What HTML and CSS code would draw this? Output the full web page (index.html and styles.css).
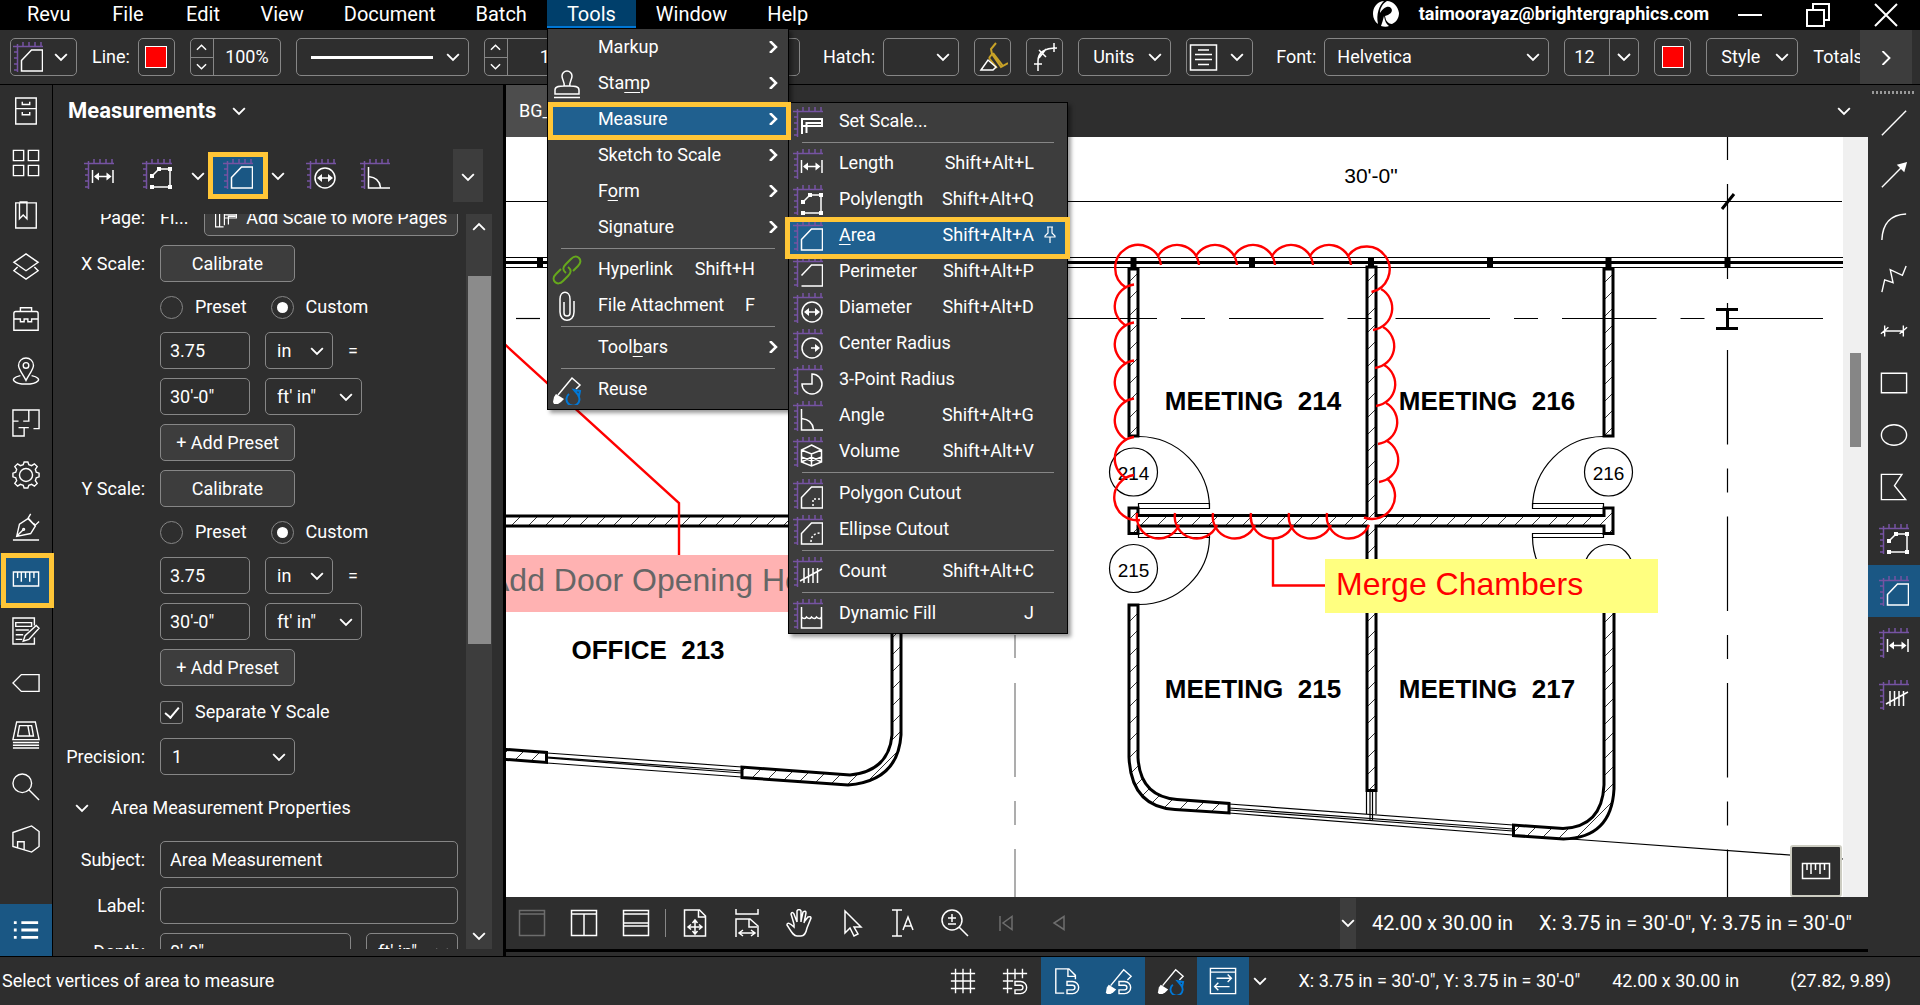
FILE: index.html
```html
<!DOCTYPE html>
<html lang="en">
  <head>
    <meta charset="UTF-8" />
    <meta name="viewport" content="width=device-width, initial-scale=1.0" />
    <title>Revu</title>
    <link rel="stylesheet" href="styles.css">
  </head>

  <body>
    <svg class="sprite" aria-hidden="true">
      <symbol id="down" viewBox="0 0 12 12"><path d="M1 3.500l5 5 5-5" /></symbol>
      <symbol id="up" viewBox="0 0 12 12"><path d="M1 8.500l5-5 5 5" /></symbol>
      <symbol id="right" viewBox="0 0 12 12"><path d="M3 0l6 6-6 6" /></symbol>
      <symbol id="ruler" viewBox="0 0 30 30">
        <path class="purple" d="M0 4.500h30M4.500 2v28M10 0v4M16 0v4M22 0v4M28 0v4M1 10h3M1 16h3M1 22h3M1 28h3" />
      </symbol>
      <symbol id="length" viewBox="0 0 30 30"><use href="#ruler" /><path d="M8.500 11v13M29 11v13M11 17.500h15" /><path class="solid" d="M10 17.500l5-4v8zM27.500 17.500l-5-4v8z" /></symbol>
      <symbol id="polylength" viewBox="0 0 30 30"><use href="#ruler" /><path d="M10 17l7-7h11v18H10" /><path class="solid" d="M8 15h4v4H8zM15 8h4v4h-4zM26 8h4v4h-4zM26 26h4v4h-4zM8 26h4v4H8z" /></symbol>
      <symbol id="area" viewBox="0 0 30 30"><use href="#ruler" /><path d="M8.500 18.500L18.500 8h11v21h-21z" /></symbol>
      <symbol id="perimeter" viewBox="0 0 30 30"><use href="#ruler" /><path d="M8.500 18.500L18.500 8h11v21h-21" /></symbol>
      <symbol id="diameter" viewBox="0 0 30 30"><use href="#ruler" /><circle cx="19" cy="19" r="10" /><path d="M13 19h12" /><path class="solid" d="M11 19l5-4v8zM27 19l-5-4v8z" /></symbol>
      <symbol id="radius" viewBox="0 0 30 30"><use href="#ruler" /><circle cx="19" cy="19" r="10" /><path d="M18 19h6" /><path class="solid" d="M27 19l-5-4v8z" /></symbol>
      <symbol id="radius3" viewBox="0 0 30 30"><use href="#ruler" /><path d="M19 9a10 10 0 1 1-10 10h10z" /></symbol>
      <symbol id="angle" viewBox="0 0 30 30"><use href="#ruler" /><path d="M8.500 8v21H30M8.500 17.500q11 1 12 11" /></symbol>
      <symbol id="volume" viewBox="0 0 30 30"><use href="#ruler" /><path d="M18.500 8l10 5v12l-10 4-10-4V13zM8.500 13l10 4 10-4M18.500 17v12M8.500 25l10-5 10 5M8.500 20l10 4 10-4" /></symbol>
      <symbol id="polycut" viewBox="0 0 30 30"><use href="#ruler" /><path d="M8.500 18.500L18.500 8h11v21h-21z" /><path stroke-dasharray="2 2" d="M20 27v-7h8" /></symbol>
      <symbol id="ellipsecut" viewBox="0 0 30 30"><use href="#ruler" /><path d="M8.500 18.500L18.500 8h11v21h-21z" /><path stroke-dasharray="2 2" d="M18 27q0-9 10-9" /></symbol>
      <symbol id="count" viewBox="0 0 30 30"><use href="#ruler" /><path d="M11 11v15M15.500 11v15M20 11v15M24.500 11v15M7 24l22-12" /></symbol>
      <symbol id="fill" viewBox="0 0 30 30"><use href="#ruler" /><path d="M8.500 8v21h20V8M8.500 18q3 3 5 0 3 3 5 0 3 3 5 0 3 3 5 0" /></symbol>
      <symbol id="setscale" viewBox="0 0 30 30"><use href="#ruler" /><path stroke-width="2" d="M9 27V12h20v7H9M13.500 26V16H28" /></symbol>
      <symbol id="gauge" viewBox="0 0 30 30"><path d="M1.500 7.500h27v15h-27zM6 8v6M10 8v10M14.500 8v6M19 8v10M23.500 8v6" /></symbol>
      <symbol id="hook" viewBox="0 0 30 30"><path d="M6 20L20 3l8 7-4 4" /><path class="solid" d="M4 19l8 5-3 3-3 2H2l-1-2 1-5z" /></symbol>
      <symbol id="magnet" viewBox="0 0 30 30"><path d="M15 15.500h6a6.500 6.500 0 0 1 0 13h-6v-4h6a2.500 2.500 0 0 0 0-5h-6z" /></symbol>
      <symbol id="reuse" viewBox="0 0 30 30"><use href="#hook" /><path class="blue" d="M17 19a6.500 6.500 0 1 0 9 1M28 16l-6-1 5 6z" /></symbol>
      <symbol id="pages" viewBox="0 0 30 30"><path d="M2 4h8M2 4v22h5M7 10v16h5M13 24V8h15v7H13M13 11h15M18 23V13h9" /></symbol>
    </svg>

    <nav class="menubar">
      <button class="menu-item">Revu</button>
      <button class="menu-item">File</button>
      <button class="menu-item">Edit</button>
      <button class="menu-item">View</button>
      <button class="menu-item">Document</button>
      <button class="menu-item">Batch</button>
      <div class="menu-holder">
        <button class="menu-item open">Tools</button>
        <ul class="menu">
          <li class="entry"><span class="icon"></span>Markup<svg class="arrow"><use href="#right" /></svg></li>
          <li class="entry">
            <svg class="icon" viewBox="0 0 30 30"><path d="M12 17c1-4-2-6-2-10a5 5 0 0 1 10 0c0 4-3 6-2 10M12 17c-4 0-9 0-9 4v4h24v-4c0-4-5-4-9-4zM2 28.500h26" /></svg>
            <span>Sta<u>m</u>p</span><svg class="arrow"><use href="#right" /></svg>
          </li>
          <li class="entry selected marked">
            <span class="icon"></span>Measure<svg class="arrow"><use href="#right" /></svg>
            <ul class="menu submenu">
              <li class="entry"><svg class="icon"><use href="#setscale" /></svg>Set Scale...</li>
              <li class="line"></li>
              <li class="entry"><svg class="icon"><use href="#length" /></svg>Length<kbd>Shift+Alt+L</kbd></li>
              <li class="entry"><svg class="icon"><use href="#polylength" /></svg>Polylength<kbd>Shift+Alt+Q</kbd></li>
              <li class="entry selected marked">
                <svg class="icon"><use href="#area" /></svg><span><u>A</u>rea</span><kbd>Shift+Alt+A</kbd>
                <svg class="pin" viewBox="0 0 12 18"><path d="M3 1h6M4 1v6L1 10v1h10v-1L8 7V1M6 11v6" /></svg>
              </li>
              <li class="entry"><svg class="icon"><use href="#perimeter" /></svg>Perimeter<kbd>Shift+Alt+P</kbd></li>
              <li class="entry"><svg class="icon"><use href="#diameter" /></svg>Diameter<kbd>Shift+Alt+D</kbd></li>
              <li class="entry"><svg class="icon"><use href="#radius" /></svg>Center Radius</li>
              <li class="entry"><svg class="icon"><use href="#radius3" /></svg>3-Point Radius</li>
              <li class="entry"><svg class="icon"><use href="#angle" /></svg>Angle<kbd>Shift+Alt+G</kbd></li>
              <li class="entry"><svg class="icon"><use href="#volume" /></svg>Volume<kbd>Shift+Alt+V</kbd></li>
              <li class="line"></li>
              <li class="entry"><svg class="icon"><use href="#polycut" /></svg>Polygon Cutout</li>
              <li class="entry"><svg class="icon"><use href="#ellipsecut" /></svg>Ellipse Cutout</li>
              <li class="line"></li>
              <li class="entry"><svg class="icon"><use href="#count" /></svg>Count<kbd>Shift+Alt+C</kbd></li>
              <li class="line"></li>
              <li class="entry"><svg class="icon"><use href="#fill" /></svg>Dynamic Fill<kbd>J</kbd></li>
            </ul>
          </li>
          <li class="entry"><span class="icon"></span>Sketch to Scale<svg class="arrow"><use href="#right" /></svg></li>
          <li class="entry"><span class="icon"></span><span>F<u>o</u>rm</span><svg class="arrow"><use href="#right" /></svg></li>
          <li class="entry"><span class="icon"></span>Signature<svg class="arrow"><use href="#right" /></svg></li>
          <li class="line"></li>
          <li class="entry">
            <svg class="icon green" viewBox="0 0 30 30"><path d="M14 18c-4-3-3-6 0-9l5-5c3-3 6-3 8-1s2 5-1 8l-5 5M16 12c4 3 3 6 0 9l-5 5c-3 3-6 3-8 1s-2-5 1-8l5-5" /></svg>
            Hyperlink<kbd>Shift+H</kbd>
          </li>
          <li class="entry">
            <svg class="icon" viewBox="0 0 30 30"><path d="M12 11v11a3 3 0 0 0 6 0V8c0-9-10-9-10 0v13c0 11 14 11 14 0V10" /></svg>
            File Attachment<kbd>F</kbd>
          </li>
          <li class="line"></li>
          <li class="entry"><span class="icon"></span><span>Tool<u>b</u>ars</span><svg class="arrow"><use href="#right" /></svg></li>
          <li class="line"></li>
          <li class="entry"><svg class="icon"><use href="#reuse" /></svg>Reuse</li>
        </ul>
      </div>
      <button class="menu-item">Window</button>
      <button class="menu-item">Help</button>
      <div class="account">
        <svg class="logo" viewBox="0 0 26 26"><path class="solid" d="M11 0C3 1 0 7 0 13c0 4 2 8 5 10C3 13 6 5 11 0zM14 0C9 3 7 8 7 12c3-5 8-8 11-5 3 4-2 7-6 8l1 4c2 3 4 4 6 4 5-2 7-7 7-11C25 5 20 0 14 0zM11 15c-1 4-2 7-3 10 3 1 6 1 8 0-3-2-4-5-5-10z" /></svg>
        <span class="email">taimoorayaz@brightergraphics.com</span>
      </div>
      <button class="window-btn" aria-label="Minimize"><svg viewBox="0 0 24 24"><path d="M0 12h24" /></svg></button>
      <button class="window-btn" aria-label="Restore"><svg viewBox="0 0 24 24"><path d="M1 7h17v16H1zM7 6V1h16v16h-5" /></svg></button>
      <button class="window-btn" aria-label="Close"><svg viewBox="0 0 24 24"><path d="M1 1l22 22M23 1L1 23" /></svg></button>
    </nav>

    <div class="toolbar">
      <button class="box tool-picker" aria-label="Area tool"><svg class="icon"><use href="#area" /></svg><svg class="chevron"><use href="#down" /></svg></button>
      <div class="group"><span>Line:</span><button class="box swatch" aria-label="Line color"><i></i></button></div>
      <div class="box spin">
        <div class="steps"><button aria-label="Increase"><svg class="chevron"><use href="#up" /></svg></button><button aria-label="Decrease"><svg class="chevron"><use href="#down" /></svg></button></div>
        <input aria-label="Opacity" value="100%">
      </div>
      <button class="box line-style" aria-label="Line style"><hr><svg class="chevron"><use href="#down" /></svg></button>
      <div class="box spin line-width">
        <div class="steps"><button aria-label="Increase"><svg class="chevron"><use href="#up" /></svg></button><button aria-label="Decrease"><svg class="chevron"><use href="#down" /></svg></button></div>
        <input aria-label="Line width" value="1">
      </div>
      <button class="box fill-color" aria-label="Fill color"></button>
      <div class="group wide"><label for="hatch">Hatch:</label><select class="box" id="hatch"><option></option></select></div>
      <button class="box square" aria-label="Highlight">
        <svg viewBox="0 0 30 30"><path class="gold" d="M18 1l-5 6 1 5-3 4M14 12l9 13 7-4M15 11l10 13M11 16l8 10" /><path d="M3 28l7-10 8 7-3 3z" /></svg>
      </button>
      <button class="box square" aria-label="Curve">
        <svg viewBox="0 0 30 30"><path d="M8 29V19Q8 6 27 6M4 22h8M24 1v9M9 8l7 7M16 7l-7 9" /></svg>
      </button>
      <select class="box units" aria-label="Units"><option>Units</option></select>
      <button class="box align" aria-label="Text alignment">
        <svg class="icon" viewBox="0 0 30 30"><path d="M1.500 3h26v25h-26zM9 8h11M6 12.500h17M6 17.500h17M9 22.500h11" /></svg>
        <svg class="chevron"><use href="#down" /></svg>
      </button>
      <div class="group wide"><label for="font">Font:</label><select class="box" id="font"><option>Helvetica</option></select></div>
      <select class="box size" aria-label="Font size"><option>12</option></select>
      <button class="box swatch" aria-label="Font color"><i></i></button>
      <select class="box style" aria-label="Style"><option>Style</option></select>
      <span class="totals">Totals</span>
      <button class="more" aria-label="More"><svg class="chevron"><use href="#right" /></svg></button>
    </div>

    <div class="workspace">
      <div class="rail">
        <button aria-label="File access"><svg viewBox="0 0 30 30"><path d="M4 1h22v28H4zM4 12.500h22M11 5v3h8V5M11 16v3h8v-3" /></svg></button>
        <button aria-label="Thumbnails"><svg viewBox="0 0 30 30"><path d="M1.500 1.500h11v11h-11zM17.500 1.500h11v11h-11zM1.500 17.500h11v11h-11zM17.500 17.500h11v11h-11z" /></svg></button>
        <button aria-label="Bookmarks"><svg viewBox="0 0 30 30"><path d="M4 2h22v27H4zM8 2v17l4-4 4 4V1H8" /></svg></button>
        <button aria-label="Layers"><svg viewBox="0 0 30 30"><path d="M15 1l13 9-13 9L2 10zM6 15l-4 4 13 9 13-9-4-4" /></svg></button>
        <button aria-label="Tool chest"><svg viewBox="0 0 30 30"><path d="M2 9q0-2 2-2h22q2 0 2 2v18H2zM9 7V3h12v4M2 15h7v3h4v-3h4v3h4v-3h7" /></svg></button>
        <button aria-label="Places"><svg viewBox="0 0 30 30"><path d="M15 25C12 19 7 13 7 9a8 8 0 0 1 16 0c0 4-5 10-8 16z" /><circle cx="15" cy="9" r="3" /><path d="M9 20c-14 3-6 9 6 9s20-6 6-9" /></svg></button>
        <button aria-label="Spaces"><svg viewBox="0 0 30 30"><path d="M7 13H1V1h28v20h-6M1 13v16h12v-9M18 2v11h-6M7 20h11" /></svg></button>
        <button aria-label="Properties"><svg viewBox="0 0 30 30"><path d="M13 1h4l1 3 3 1 3-2 3 3-2 3 1 3 3 1v4l-3 1-1 3 2 3-3 3-3-2-3 1-1 3h-4l-1-3-3-1-3 2-3-3 2-3-1-3-3-1v-4l3-1 1-3-2-3 3-3 3 2 3-1z" /><circle cx="15" cy="15" r="7" /></svg></button>
        <button aria-label="Signatures"><svg viewBox="0 0 30 30"><path d="M1 29h28M5 25l3-13 9-6 8 8-5 8zM5 25l7-7M17 6l3-5M17 5l8 9M23 11l2 2 4-4" /><circle cx="12.500" cy="17.500" r="1" /></svg></button>
        <button class="active marked" aria-label="Measurements"><svg viewBox="0 0 30 30"><use href="#gauge" /></svg></button>
        <button aria-label="Forms"><svg viewBox="0 0 30 30"><path d="M24 9V1H1v28h23v-7M4 6h17v4H4zM4 14h14M4 19h8M4 24h7M12 26l2-6L26 9l3 3-11 12z" /></svg></button>
        <button aria-label="Tags"><svg viewBox="0 0 30 30"><path d="M10 6h19v18H10l-9-9z" /></svg></button>
        <button aria-label="Sets"><svg viewBox="0 0 30 30"><path d="M5 1h20l4 19H1zM8 5h13l2 11H6zM17 5l2 11M1 23h28M1 26h28M1 29h28" /></svg></button>
        <button aria-label="Search"><svg viewBox="0 0 30 30"><circle cx="11" cy="11" r="10" /><path d="M18 18l11 11" /></svg></button>
        <button aria-label="3D model"><svg viewBox="0 0 30 30"><path d="M1 8l20-7 8 6v16l-8 6-20-6zM6 25v-7h7v9" /></svg></button>
        <button class="active last" aria-label="Markups list"><svg viewBox="0 0 30 30"><path class="thick" d="M2 7h3M10 7h18M2 15h3M10 15h18M2 23h3M10 23h18" /></svg></button>
      </div>

      <section class="panel">
        <h1>Measurements <svg class="chevron"><use href="#down" /></svg></h1>
        <div class="tools">
          <button class="tool" aria-label="Length"><svg class="icon"><use href="#length" /></svg></button>
          <button class="tool split" aria-label="Polylength"><svg class="icon"><use href="#polylength" /></svg><svg class="chevron"><use href="#down" /></svg></button>
          <button class="tool active marked" aria-label="Area"><svg class="icon"><use href="#area" /></svg></button>
          <button class="tool drop" aria-label="More area tools"><svg class="chevron"><use href="#down" /></svg></button>
          <button class="tool" aria-label="Diameter"><svg class="icon"><use href="#diameter" /></svg></button>
          <button class="tool" aria-label="Angle"><svg class="icon"><use href="#angle" /></svg></button>
          <button class="expand" aria-label="Expand"><svg class="chevron"><use href="#down" /></svg></button>
        </div>
        <div class="scroller">
          <form class="form">
            <div class="row"><span class="name">Page:</span><span>Fl...</span><button type="button" class="box btn grow"><svg class="icon small"><use href="#pages" /></svg>Add Scale to More Pages</button></div>
            <div class="row"><span class="name">X Scale:</span><button type="button" class="box btn">Calibrate</button></div>
            <div class="row choices">
              <span class="name"></span>
              <label class="choice"><input type="radio" name="x-mode">Preset</label>
              <label class="choice"><input type="radio" name="x-mode" checked>Custom</label>
            </div>
            <div class="row"><span class="name"></span><input class="box num" aria-label="X paper length" value="3.75"><select class="box unit" aria-label="X paper unit"><option>in</option></select>=</div>
            <div class="row"><span class="name"></span><input class="box num" aria-label="X real length" value="30'-0&quot;"><select class="box unit long" aria-label="X real unit"><option>ft' in"</option></select></div>
            <div class="row"><span class="name"></span><button type="button" class="box btn">+ Add Preset</button></div>
            <div class="row"><span class="name">Y Scale:</span><button type="button" class="box btn">Calibrate</button></div>
            <div class="row choices">
              <span class="name"></span>
              <label class="choice"><input type="radio" name="y-mode">Preset</label>
              <label class="choice"><input type="radio" name="y-mode" checked>Custom</label>
            </div>
            <div class="row"><span class="name"></span><input class="box num" aria-label="Y paper length" value="3.75"><select class="box unit" aria-label="Y paper unit"><option>in</option></select>=</div>
            <div class="row"><span class="name"></span><input class="box num" aria-label="Y real length" value="30'-0&quot;"><select class="box unit long" aria-label="Y real unit"><option>ft' in"</option></select></div>
            <div class="row"><span class="name"></span><button type="button" class="box btn">+ Add Preset</button></div>
            <div class="row choices check"><span class="name"></span><label class="choice"><input type="checkbox" checked>Separate Y Scale</label></div>
            <div class="row"><label class="name" for="precision">Precision:</label><select class="box precision" id="precision"><option>1</option></select></div>
            <h2><svg class="chevron"><use href="#down" /></svg>Area Measurement Properties</h2>
            <div class="row"><label class="name" for="subject">Subject:</label><input class="box grow" id="subject" value="Area Measurement"></div>
            <div class="row"><label class="name" for="label">Label:</label><input class="box grow" id="label"></div>
            <div class="row"><label class="name" for="depth">Depth:</label><input class="box grow" id="depth" value="0'-0&quot;"><select class="box depth-unit" aria-label="Depth unit"><option>ft' in"</option></select></div>
          </form>
          <div class="scrollbar"><svg class="chevron"><use href="#up" /></svg><div class="thumb"></div><svg class="chevron"><use href="#down" /></svg></div>
        </div>
      </section>

      <main class="document">
        <div class="tabs"><div class="tab">BG_</div><svg class="chevron"><use href="#down" /></svg></div>
        <div class="page">
          <svg class="plan" viewBox="506 137 1337 760" preserveAspectRatio="xMinYMin slice">
            <defs>
              <pattern id="hatching" width="17" height="17" patternUnits="userSpaceOnUse"><path d="M-1 18L18 -1" stroke="#000" stroke-width="0.800" /></pattern>
              <path id="top" d="M-19 11A22 22 0 0 1 22 20" />
              <path id="left" d="M12 19A22 22 0 0 1 20 -22" />
              <path id="bottom" d="M-23 -23A22 22 0 0 0 19 -11" />
              <path id="side" d="M-10 -20A22 22 0 0 1 -18 21" />
            </defs>

            <!-- grid lines -->
            <g class="thin">
              <path d="M506 201.500H1842M506 257.500H1843M506 267.500H1843" />
              <path d="M516 318.500h24" />
              <path d="M1062.500 318.500H1823" stroke-dasharray="94.500 24 24 24" />
              <path d="M1727.500 137v23M1727.500 184v95M1727.500 303v6" />
              <path d="M1727.500 350V897" stroke-dasharray="94.500 24 24 24" />
              <path d="M1564 838.500L1843 859" />
              <path class="grey" d="M1015 635v23M1015 683v94M1015 801v24M1015 849v48" />
            </g>
            <path class="wall" d="M506 262.500H1843M1716 309.500h22M1716 328.500h22M1722 209l12-15" />
            <path class="wall" d="M1727.500 309v20" />
            <path class="solid" d="M537 257h6v11h-6zM1130.500 257h6v11h-6zM1249 257h6v11h-6zM1368 257h6v11h-6zM1487 257h6v11h-6zM1605.500 257h6v11h-6zM1724.500 257h6v11h-6z" />

            <!-- walls -->
            <g class="wall" fill="url(#hatching)">
              <path d="M1129 269h9v167h-9z" />
              <path d="M1604 269h9v167h-9z" />
              <path d="M1367 267v248.500H1138V508h-9v25.500h9v-7.500h229v264.500h9V526h228v7.500h9V508h-9v7.500h-228V267z" />
              <path d="M1129 605v152q2 50 46 52.500l54 3.500v-9.500l-52-4q-37-3-39-42V605z" />
              <path d="M1604 605v180q-2 42-41 43.500l-49.500-3.500v10.500l50 3.500q48-1 50.500-50V605z" />
              <path d="M500 516h300v10H500z" />
              <path d="M892 600v135q-3 36-42 40l-108-8v10.500l106 7.500q50-4 53-50V600z" />
              <path d="M500 749l46.500 3.500v10L500 759z" />
            </g>

            <!-- windows -->
            <g class="thin">
              <path d="M1229 804l284 21M1229 808l284 21M1229 810l284 21M1229 813l284 22" />
              <path d="M547 753l195 14M547 757l195 14M547 758l195 15M547 763l195 14" />
              <path d="M1370 792v28M1372.500 792v28M1366.500 792v22M1376 792v22" />
            </g>

            <!-- doors -->
            <g class="thin">
              <path d="M1138.500 503.500h71v5h-71zM1138.500 533.500h71v4h-71zM1139 436.500A71 72 0 0 1 1209.500 508M1209.500 537A71 68 0 0 1 1139 604.500" />
              <path d="M1532.500 503.500h71v5h-71zM1532.500 533.500h71v4h-71zM1603 436.500A71 72 0 0 0 1532.500 508M1532.500 537A71 68 0 0 0 1603 604.500" />
              <circle cx="1133.500" cy="472" r="24" />
              <circle cx="1133.500" cy="568.500" r="24" />
              <circle cx="1608.500" cy="472" r="24" />
              <circle cx="1608.500" cy="568.500" r="24" />
            </g>
            <text class="door" x="1133.500" y="480">214</text>
            <text class="door" x="1133.500" y="577">215</text>
            <text class="door" x="1608.500" y="480">216</text>

            <text class="dim" x="1371" y="183">30'-0"</text>
            <text class="room" x="1253" y="410">MEETING&#160; 214</text>
            <text class="room" x="1487" y="410">MEETING&#160; 216</text>
            <text class="room" x="1253" y="698">MEETING&#160; 215</text>
            <text class="room" x="1487" y="698">MEETING&#160; 217</text>
            <text class="room" x="648" y="659">OFFICE&#160; 213</text>

            <!-- markups -->
            <g class="cloud">
              <path d="M1126 287.500A23 23 0 1 1 1161 265" />
              <use href="#top" x="1177" y="245" /><use href="#top" x="1215" y="245" /><use href="#top" x="1253" y="245" /><use href="#top" x="1291" y="245" /><use href="#top" x="1329" y="245" />
              <path d="M1348 256A23 23 0 1 1 1371.500 292" />
              <use href="#side" x="1391" y="309" /><use href="#side" x="1393" y="347" /><use href="#side" x="1394" y="385" /><use href="#side" x="1396" y="423" /><use href="#side" x="1397" y="461" />
              <path d="M1387 478.500A23 23 0 0 1 1364 517.500" />
              <use href="#left" x="1114" y="306.500" /><use href="#left" x="1114" y="344.500" /><use href="#left" x="1114" y="382.500" /><use href="#left" x="1114" y="420.500" /><use href="#left" x="1114" y="459" />
              <path d="M1134 475A22.500 22.500 0 1 0 1140 520" />
              <use href="#bottom" x="1160" y="536" /><use href="#bottom" x="1198" y="536" /><use href="#bottom" x="1236" y="536" /><use href="#bottom" x="1274" y="536" /><use href="#bottom" x="1312" y="536" /><use href="#bottom" x="1350" y="536" />
              <path d="M1273 538v47.500h52M500 340l179 163v52" />
            </g>
            <rect class="note" x="1325" y="559" width="333" height="54" />
            <text class="note-text" x="1336" y="595">Merge Chambers</text>
            <rect class="pink" x="500" y="555" width="380" height="57" />
            <text class="pink-text" x="488" y="591">Add Door Opening Here</text>
          </svg>
          <div class="page-scroll"><div class="thumb"></div></div>
          <button class="float" aria-label="Page scale"><svg viewBox="0 0 30 30"><use href="#gauge" /></svg></button>
        </div>
        <div class="navbar">
          <button disabled aria-label="Single view"><svg viewBox="0 0 28 28"><path d="M1.500 1.500h25v25h-25zM1.500 5h25" /></svg></button>
          <button aria-label="Split vertical"><svg viewBox="0 0 28 28"><path d="M1.500 1.500h25v25h-25zM1.500 5h25M14 5v21" /></svg></button>
          <button aria-label="Split horizontal"><svg viewBox="0 0 28 28"><path d="M1.500 1.500h25v25h-25zM1.500 5h25M1.500 14h25M1.500 17h25" /></svg></button>
          <i class="divider"></i>
          <button aria-label="Fit page"><svg viewBox="0 0 28 28"><path d="M3.500 1h15l6 6v20h-21zM17.500 1v7h7M14 12v12M8 18h12M11.500 14l2.500-3 2.500 3M11.500 22l2.500 3 2.500-3M10 15.500L7 18l3 2.500M18 15.500l3 2.500-3 2.500" /></svg></button>
          <button aria-label="Fit width"><svg viewBox="0 0 28 28"><path d="M3 0v5h22V0M3 28V10h14l8 7v11M16 10v8h8M7 24h14M10 21l-4 3 4 3M18 21l4 3-4 3" /></svg></button>
          <button aria-label="Pan"><svg viewBox="0 0 28 28"><path d="M9 15L6 5q1-3 3 0l3 8M12 13V2q2-3 4 0v11M16 12l2-9q3-2 3 1l-2 10M19 13l4-5q3-1 3 1l-4 10c-1 5-3 8-6 8h-4c-4 0-6-5-10-11 0-3 3-2 7 2v-3" /></svg></button>
          <button aria-label="Select"><svg viewBox="0 0 28 28"><path d="M8 2v22l5-5 4 8 4-2-4-7h7z" /></svg></button>
          <button class="text-select" aria-label="Select text"><svg viewBox="0 0 28 28"><path d="M3 1h10M3 27h10M8 1v26M14 21l5-13 5 13M16 17h6" /></svg></button>
          <button aria-label="Zoom"><svg viewBox="0 0 28 28"><circle cx="11" cy="11" r="10" /><path d="M18 18l9 9M7 9h8M11 5v8M7 15h8" /></svg></button>
          <button disabled aria-label="First page"><svg viewBox="0 0 28 28"><path d="M7 7v15M19 7.500v13l-9-6.500z" /></svg></button>
          <button disabled aria-label="Previous page"><svg viewBox="0 0 28 28"><path d="M19 7.500v13L9 14z" /></svg></button>
          <button class="nav-more" aria-label="More"><svg class="chevron"><use href="#down" /></svg></button>
          <span class="page-size">42.00 x 30.00 in</span>
          <span class="page-scale">X: 3.75 in = 30'-0", Y: 3.75 in = 30'-0"</span>
        </div>
      </main>

      <div class="rail right">
        <i class="grip"></i>
        <button aria-label="Line"><svg viewBox="0 0 30 30"><path d="M2 28L28 2" /></svg></button>
        <button aria-label="Arrow"><svg viewBox="0 0 30 30"><path d="M2 28L24 6" /><path class="solid" d="M29 1l-3 11-8-8z" /></svg></button>
        <button aria-label="Arc"><svg viewBox="0 0 30 30"><path d="M2 29Q3 2 28 1" /></svg></button>
        <button aria-label="Polyline"><svg viewBox="0 0 30 30"><path d="M2 29l3-13 9 3-3-14 13 6 4-10" /></svg></button>
        <button aria-label="Dimension"><svg viewBox="0 0 30 30"><path d="M5 9v12M25 9v12M5 15h20M1 18l8-7M21 18l8-7" /></svg></button>
        <button aria-label="Rectangle"><svg viewBox="0 0 30 30"><path d="M1.500 4.500h27v21h-27z" /></svg></button>
        <button aria-label="Ellipse"><svg viewBox="0 0 30 30"><ellipse cx="15" cy="15" rx="13.500" ry="11" /></svg></button>
        <button aria-label="Polygon"><svg viewBox="0 0 30 30"><path d="M1.500 1.500h22l-8 12 12 15h-26z" /></svg></button>
        <button aria-label="Polylength"><svg class="icon"><use href="#polylength" /></svg></button>
        <button class="active" aria-label="Area"><svg class="icon"><use href="#area" /></svg></button>
        <button aria-label="Length"><svg class="icon"><use href="#length" /></svg></button>
        <button aria-label="Count"><svg class="icon"><use href="#count" /></svg></button>
      </div>
    </div>

    <footer class="statusbar">
      <span class="hint">Select vertices of area to measure</span>
      <button aria-label="Grid"><svg viewBox="0 0 30 30"><path d="M2 7h26M2 15h26M2 23h26M7 2v26M15 2v26M23 2v26" /></svg></button>
      <button aria-label="Snap to grid"><svg viewBox="0 0 30 30"><path d="M2 7h26M2 15h11M2 23h10M7 2v26M15 2v11M23 2v10" /><use href="#magnet" /></svg></button>
      <button class="active" aria-label="Snap to content"><svg viewBox="0 0 30 30"><path d="M12 28H3V2h14l7 7v4M16 2v8h8" /><use href="#magnet" /></svg></button>
      <button class="active" aria-label="Snap to markup"><svg viewBox="0 0 30 30"><use href="#hook" /><use href="#magnet" /></svg></button>
      <button aria-label="Reuse"><svg viewBox="0 0 30 30"><use href="#reuse" /></svg></button>
      <button class="active" aria-label="Sync"><svg viewBox="0 0 30 30"><path d="M1.500 1.500h27v27h-27zM1.500 5.500h27M8 12h16M20 8l4 4-4 4M22 21H6M10 17l-4 4 4 4" /></svg></button>
      <svg class="chevron"><use href="#down" /></svg>
      <span class="scale">X: 3.75 in = 30'-0", Y: 3.75 in = 30'-0"</span>
      <span class="sheet">42.00 x 30.00 in</span>
      <span class="coords">(27.82, 9.89)</span>
    </footer>
  </body>
</html>
```
FILE: styles.css
```css
* {
  box-sizing: border-box;
  margin: 0;
  padding: 0;
}

body {
  height: 100vh;
  display: flex;
  flex-direction: column;
  overflow: hidden;
  background: #2e2e2e;
  color: white;
  font-family: Roboto, "Liberation Sans", sans-serif;
  font-size: 18px;
  line-height: 22px;
}

button,
input,
select {
  font: inherit;
  color: inherit;
  background: none;
  border: none;
  appearance: none;
}

svg {
  fill: none;
  stroke: white;
  stroke-width: 1.5;
  flex-shrink: 0;
  vertical-align: middle;
}

.sprite {
  position: absolute;
  width: 0;
  height: 0;
}

.icon {
  width: 30px;
  height: 30px;
  flex-shrink: 0;
}

.icon.small {
  width: 24px;
  height: 24px;
}

.chevron {
  width: 14px;
  height: 14px;
  stroke-width: 1.6;
}

.purple {
  stroke: #7653a2;
}

.solid {
  fill: white;
  stroke: none;
}

.blue {
  stroke: #0078d7;
  stroke-width: 2;
}

.green {
  stroke: #66a81c;
  stroke-width: 2;
}

.gold {
  stroke: #c8a227;
  stroke-width: 2;
}

.thick {
  stroke-width: 3;
}

.active {
  background: #1a5784;
}

.marked {
  position: relative;
}

.marked::after {
  content: "";
  position: absolute;
  inset: 0 -3px -2px 0;
  border: 5px solid #ffc637;
  z-index: 5;
}

/* menu bar */
.menubar {
  display: flex;
  height: 30px;
  background: black;
  padding-left: 7px;
  flex-shrink: 0;
}

.menu-item {
  min-width: 75px;
  height: 28px;
  padding: 0 20px;
  font-size: 20px;
}

.menu-item.open {
  background: #003f6b;
  border-bottom: 2px solid #0078d7;
  padding-top: 2px;
}

.menu-holder {
  position: relative;
}

.menu {
  position: absolute;
  top: 28px;
  left: 0;
  width: 242px;
  padding: 1px 0;
  list-style: none;
  background: #3d3d3d;
  border: 1px solid black;
  box-shadow: 3px 3px 4px rgba(0, 0, 0, 0.4);
  z-index: 10;
}

.submenu {
  top: 0;
  left: 240px;
  width: 280px;
  z-index: 2;
}

.entry {
  position: relative;
  display: flex;
  align-items: center;
  height: 36px;
  padding: 0 33px 2px 4px;
  white-space: nowrap;
}

.entry .icon {
  margin: 2px 16px 0 0;
}

.entry kbd {
  margin-left: auto;
  font: inherit;
}

.entry .arrow,
.entry .pin {
  position: absolute;
  right: 9px;
  width: 12px;
  height: 12px;
  stroke-width: 2.5;
}

.entry .pin {
  right: 11px;
  height: 18px;
  stroke-width: 1.2;
}

.entry u {
  text-underline-offset: 3px;
}

.selected {
  background: #20608f;
}

.submenu .marked::after {
  inset: -1px -3px -5px -4px;
}

.line {
  height: 6px;
  padding: 2px 13px 0;
}

.line::before {
  content: "";
  display: block;
  border-top: 1px solid #868686;
}

.account {
  display: flex;
  align-items: center;
  gap: 20px;
  margin-left: auto;
  height: 28px;
  padding-right: 7px;
}

.logo {
  width: 26px;
  height: 26px;
}

.email {
  font-weight: bold;
}

.window-btn {
  width: 68px;
  height: 30px;
}

.window-btn svg {
  width: 24px;
  height: 24px;
  stroke-width: 2;
}

/* properties toolbar */
.toolbar {
  display: flex;
  align-items: center;
  gap: 15px;
  height: 55px;
  padding: 0 8px 0 10px;
  border-bottom: 1px solid black;
  flex-shrink: 0;
}

.box {
  height: 38px;
  border: 1px solid #868686;
  border-radius: 5px;
  padding: 0 9px;
  flex-shrink: 0;
}

select.box {
  padding: 0 25px 0 14px;
  background: url("data:image/svg+xml,%3Csvg xmlns='http://www.w3.org/2000/svg' width='14' height='14' viewBox='0 0 12 12'%3E%3Cpath d='M1 3.500l5 5 5-5' fill='none' stroke='white' stroke-width='1.6'/%3E%3C/svg%3E") no-repeat right 8px center;
}

.group {
  display: flex;
  align-items: center;
  gap: 8px;
}

.group.wide {
  margin-left: 8px;
}

.tool-picker,
.align {
  display: flex;
  align-items: center;
  justify-content: space-between;
  width: 67px;
  padding: 0 8px 0 2px;
}

.swatch,
.square {
  display: flex;
  align-items: center;
  justify-content: center;
  width: 37px;
  padding: 0;
}

.square svg {
  width: 30px;
  height: 30px;
}

.swatch i {
  width: 22px;
  height: 22px;
  background: red;
  border: 1px solid white;
}

.spin {
  display: flex;
  width: 91px;
  padding: 0;
}

.spin.line-width {
  width: 99px;
}

.steps {
  display: flex;
  flex-direction: column;
  width: 23px;
  border-right: 1px solid #868686;
}

.steps button {
  display: flex;
  flex: 1;
  align-items: center;
  justify-content: center;
}

.steps button:first-child {
  border-bottom: 1px solid #868686;
}

.steps .chevron {
  width: 11px;
  height: 11px;
}

.spin input {
  flex: 1;
  min-width: 0;
  text-align: center;
}

.line-style {
  display: flex;
  align-items: center;
  justify-content: space-between;
  width: 173px;
  padding: 0 8px 0 14px;
}

.line-style hr {
  width: 122px;
  border: none;
  border-top: 3px solid white;
}

.fill-color {
  width: 202px;
}

#hatch {
  width: 76px;
}

.units {
  width: 93px;
}

#font {
  width: 225px;
  padding-left: 12px;
}

select.size {
  width: 75px;
  padding-left: 9px;
  background-image: url("data:image/svg+xml,%3Csvg xmlns='http://www.w3.org/2000/svg' width='30' height='36'%3E%3Cpath d='M1.500 0v36' stroke='%23868686'/%3E%3Cpath d='M10 15l6 6 6-6' fill='none' stroke='white' stroke-width='1.8'/%3E%3C/svg%3E");
  background-position: right 0 center;
}

.style {
  width: 92px;
}

.totals {
  flex: 1;
  min-width: 0;
  overflow: hidden;
  margin-right: -15px;
}

.more {
  width: 52px;
  height: 54px;
  background: #3d3d3d;
  flex-shrink: 0;
}

/* side rails */
.workspace {
  display: flex;
  flex: 1;
  min-height: 0;
}

.rail {
  display: flex;
  flex-direction: column;
  width: 53px;
  border-right: 1px solid black;
  flex-shrink: 0;
}

.rail button {
  display: flex;
  align-items: center;
  justify-content: center;
  height: 52px;
  flex-shrink: 0;
}

.rail svg {
  width: 28px;
  height: 28px;
}

.rail .icon {
  width: 30px;
  height: 30px;
}

.rail .last {
  margin-top: auto;
}

.rail .marked::after {
  inset: 0 -2px -3px 1px;
}

.rail.right {
  width: 52px;
  border: none;
}

.grip {
  height: 3px;
  margin: 6px 4px 3px;
  background: repeating-linear-gradient(90deg, #999 0 2px, transparent 2px 4px);
}

/* measurements panel */
.panel {
  display: flex;
  flex-direction: column;
  width: 453px;
  padding-right: 11px;
  border-right: 3px solid black;
  flex-shrink: 0;
}

h1 {
  display: flex;
  align-items: center;
  gap: 16px;
  height: 52px;
  padding-left: 15px;
  font-size: 22px;
}

.tools {
  display: flex;
  align-items: center;
  height: 77px;
  padding: 0 9px 0 23px;
}

.tool {
  display: flex;
  align-items: center;
  justify-content: center;
  gap: 19px;
  width: 46px;
  height: 37px;
}

.tool .icon {
  margin-bottom: 4px;
}

.tool.split {
  width: 68px;
  margin: 0 6px 0 17px;
}

.tool.active {
  width: 50px;
}

.tool.marked::after {
  inset: -5px;
}

.tool.drop {
  width: 30px;
}

.tool.drop + .tool {
  margin: 0 8px 0 5px;
}

.expand {
  width: 30px;
  height: 53px;
  margin-left: auto;
  background: #3d3d3d;
}

.scroller {
  display: flex;
  justify-content: space-between;
  flex: 1;
  min-height: 0;
  overflow: hidden;
  margin-bottom: 7px;
}

.form {
  display: flex;
  flex-direction: column;
  gap: 9px;
  width: 405px;
  margin-top: -15px;
}

.row {
  display: flex;
  align-items: center;
  gap: 15px;
  height: 37px;
  flex-shrink: 0;
}

.row .box {
  height: 37px;
}

.name {
  width: 92px;
  text-align: right;
}

.btn {
  display: flex;
  align-items: center;
  justify-content: center;
  gap: 8px;
  width: 135px;
  background: #3d3d3d;
}

.grow {
  flex: 1;
  width: auto;
  min-width: 0;
}

.row.choices {
  height: 32px;
}

.choice {
  display: flex;
  align-items: center;
  gap: 12px;
  margin-right: 9px;
}

.choice input {
  display: grid;
  place-items: center;
  width: 23px;
  height: 23px;
  border: 1px solid #868686;
  border-radius: 3px;
}

.choice input[type="radio"] {
  border-radius: 50%;
}

.choice input[type="radio"]:checked::before {
  content: "";
  width: 11px;
  height: 11px;
  border-radius: 50%;
  background: white;
}

.choice input[type="checkbox"]:checked::before {
  content: "";
  width: 6px;
  height: 12px;
  margin-bottom: 3px;
  border: solid white;
  border-width: 0 2px 2px 0;
  transform: rotate(40deg);
}

.row.check {
  height: 34px;
}

.num {
  width: 90px;
}

select.unit,
select.depth-unit {
  width: 68px;
  padding-left: 11px;
}

select.unit.long {
  width: 97px;
}

select.depth-unit {
  width: 92px;
}

select.precision {
  width: 135px;
  padding-left: 11px;
}

h2 {
  display: flex;
  align-items: center;
  gap: 22px;
  height: 48px;
  padding-left: 22px;
  font-size: 18px;
  font-weight: normal;
  flex-shrink: 0;
}

.scrollbar {
  display: flex;
  flex-direction: column;
  align-items: center;
  width: 26px;
  padding: 6px 0;
  background: #3d3d3d;
}

.scrollbar .thumb {
  width: 23px;
  height: 368px;
  margin: 42px 0 auto;
  background: #8b8b8b;
}

/* document */
.document {
  display: flex;
  flex-direction: column;
  flex: 1;
  min-width: 0;
  margin-bottom: 4px;
  border-bottom: 3px solid black;
}

.tabs {
  display: flex;
  align-items: center;
  justify-content: space-between;
  height: 52px;
  padding-right: 17px;
  flex-shrink: 0;
}

.tab {
  height: 52px;
  width: 200px;
  padding: 15px 13px;
  background: #4d4d4d;
}

.page {
  position: relative;
  display: flex;
  flex: 1;
  min-height: 0;
  background: white;
}

.plan {
  flex: 1;
  min-width: 0;
  height: 100%;
  stroke: none;
}

.page-scroll {
  width: 25px;
  padding: 216px 7px;
  background: #f0f0f0;
}

.page-scroll .thumb {
  height: 94px;
  background: #868686;
}

.float {
  position: absolute;
  right: 26px;
  bottom: 0;
  width: 52px;
  height: 52px;
  background: #2e2e2e;
  border: 2px solid #cdcdc2;
  border-radius: 3px;
}

.float svg {
  width: 30px;
  height: 30px;
}

.plan .thin {
  stroke: black;
  stroke-width: 1.2;
}

.plan .grey {
  stroke: #777;
}

.plan .wall {
  stroke: black;
  stroke-width: 3;
}

.plan .solid {
  fill: black;
}

.plan text {
  font-family: "Liberation Sans", sans-serif;
  fill: black;
}

.plan .room {
  font-size: 26px;
  font-weight: bold;
  text-anchor: middle;
}

.plan .door {
  font-size: 19px;
  text-anchor: middle;
}

.plan .dim {
  font-size: 21px;
  text-anchor: middle;
}

.plan .cloud {
  stroke: red;
  stroke-width: 2.4;
}

.plan .note {
  fill: #ffff80;
}

.plan .pink {
  fill: #ffb2b2;
}

.plan .note-text,
.plan .pink-text {
  font-size: 32px;
  fill: red;
}

.plan .pink-text {
  fill: #666;
}

.navbar {
  display: flex;
  align-items: center;
  height: 52px;
  font-size: 20px;
  flex-shrink: 0;
}

.navbar button {
  display: flex;
  align-items: center;
  justify-content: center;
  width: 52px;
  height: 51px;
}

.navbar button:disabled {
  opacity: 0.3;
}

.navbar svg {
  width: 28px;
  height: 28px;
}

.navbar .divider {
  width: 1px;
  height: 28px;
  margin: 0 3px;
  background: #868686;
}

.navbar .nav-more {
  width: 16px;
  margin-left: auto;
  background: #3d3d3d;
}

.navbar .chevron {
  width: 14px;
  height: 14px;
}

.page-size {
  margin: 0 26px 0 16px;
}

.page-scale {
  margin-right: 16px;
}

/* status bar */
.statusbar {
  display: flex;
  align-items: center;
  height: 49px;
  border-top: 1px solid black;
  flex-shrink: 0;
}

.statusbar button {
  display: flex;
  align-items: center;
  justify-content: center;
  width: 52px;
  height: 48px;
}

.statusbar button svg {
  width: 28px;
  height: 28px;
}

.statusbar > .chevron {
  margin: 0 32px 0 4px;
}

.hint {
  margin: 0 auto 0 2px;
}

.sheet {
  margin: 0 51px 0 32px;
}

.coords {
  margin-right: 29px;
}
```
